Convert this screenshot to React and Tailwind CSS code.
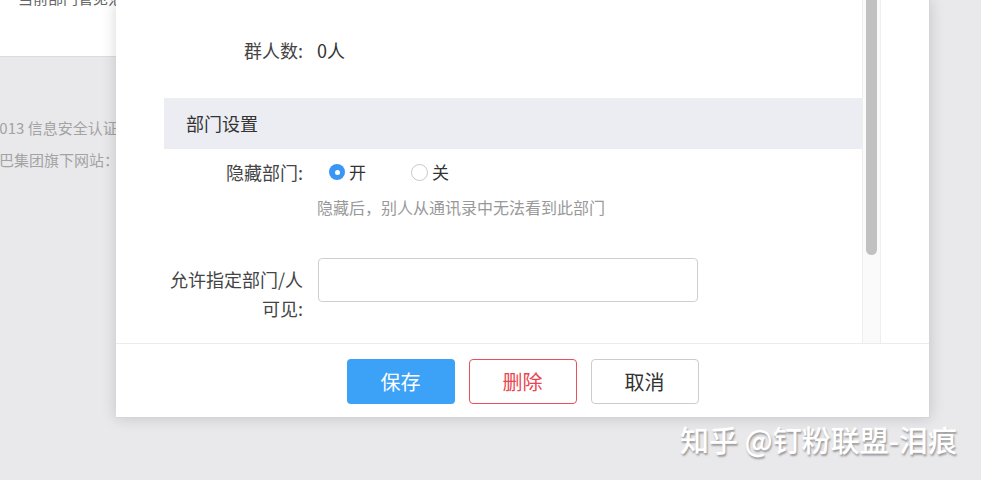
export default function App() {
  const font = { fontFamily: '"Noto Sans CJK SC", "Noto Sans", sans-serif' };
  return (
    <div
      className="relative w-[981px] h-[480px] overflow-hidden bg-[#e9e9ec] text-[#333]"
      style={font}
    >
      {/* page behind the dialog */}
      <div className="w-[130px]">
        <div className="h-[57px] bg-white border-b border-[#dcdce0] overflow-hidden">
          <div className="ml-[18px] -mt-[12px] whitespace-nowrap text-[15px] leading-[20px] text-[#666]">
            当前部门管见范围
          </div>
        </div>
        <div className="mt-[60px] whitespace-nowrap text-[15px] leading-[22px] text-[#a3a3a3]">
          <div className="-ml-[9px]">2013 信息安全认证</div>
          <div className="-ml-[46px] mt-[10px]">阿里巴巴集团旗下网站：</div>
        </div>
      </div>

      {/* dialog */}
      <div className="absolute left-[116px] top-0 w-[814px] h-[418px] bg-white flex flex-col shadow-[0_0_14px_rgba(0,0,0,0.16)] border-b border-r border-[#d6d6d9]">
        <div className="h-[343px] flex">
          <div className="w-[746px] pt-[30px]">
            {/* member count */}
            <div className="flex items-center h-[40px]">
              <div className="w-[187px] text-right text-[18px] text-[#444]">群人数:</div>
              <div className="ml-[14px] text-[18px] text-[#333]">0人</div>
            </div>

            {/* section header */}
            <div className="ml-[48px] mt-[28px] h-[51px] bg-[#ebedf2] flex items-center pl-[22px] text-[18px] text-[#333]">
              部门设置
            </div>

            {/* hide toggle */}
            <div className="flex items-center h-[40px] mt-[3px]">
              <div className="w-[187px] text-right text-[18px] text-[#444]">隐藏部门:</div>
              <div className="ml-[26px] flex items-center">
                <span className="w-[16px] h-[16px] rounded-full bg-[#3a96f5] flex items-center justify-center">
                  <span className="w-[5px] h-[5px] rounded-full bg-white" />
                </span>
                <span className="ml-[4px] text-[17px] text-[#333]">开</span>
                <span className="ml-[45px] w-[17px] h-[17px] rounded-full border border-[#c8c8c8] bg-white" />
                <span className="ml-[4px] text-[17px] text-[#333]">关</span>
              </div>
            </div>
            <div className="ml-[201px] mt-[5px] text-[16px] leading-[20px] text-[#999]">
              隐藏后，别人从通讯录中无法看到此部门
            </div>

            {/* visibility */}
            <div className="flex mt-[41px]">
              <div className="w-[187px] pt-[7px] text-right text-[18px] leading-[29px] text-[#444]">
                允许指定部门/人
                <br />
                可见:
              </div>
              <div className="ml-[15px] w-[380px] h-[44px] rounded-[4px] border border-[#cfcfcf] bg-white" />
            </div>
          </div>

          {/* scrollbar */}
          <div className="w-[19px] h-full bg-[#fafafa] border-x border-[#eeeeee] flex justify-center">
            <div className="w-[11px] h-[255px] rounded-b-full bg-[#c1c1c1]" />
          </div>
        </div>

        {/* footer */}
        <div className="flex-1 border-t border-[#ececec] flex justify-center pt-[15px] gap-[14px]">
          <button className="w-[108px] h-[45px] rounded-[4px] bg-[#3ba2f7] text-white text-[20px]">
            保存
          </button>
          <button className="w-[108px] h-[45px] rounded-[4px] border border-[#e9515a] bg-white text-[#e9454f] text-[20px]">
            删除
          </button>
          <button className="w-[108px] h-[45px] rounded-[4px] border border-[#cccccc] bg-white text-[#333] text-[20px]">
            取消
          </button>
        </div>
      </div>

      {/* watermark */}
      <div className="absolute left-[680px] top-[419px] whitespace-nowrap text-[29px] leading-[40px] text-white font-medium [text-shadow:1px_2px_2px_rgba(0,0,0,0.35)]">
        知乎 @钉粉联盟-泪痕
      </div>
    </div>
  );
}
